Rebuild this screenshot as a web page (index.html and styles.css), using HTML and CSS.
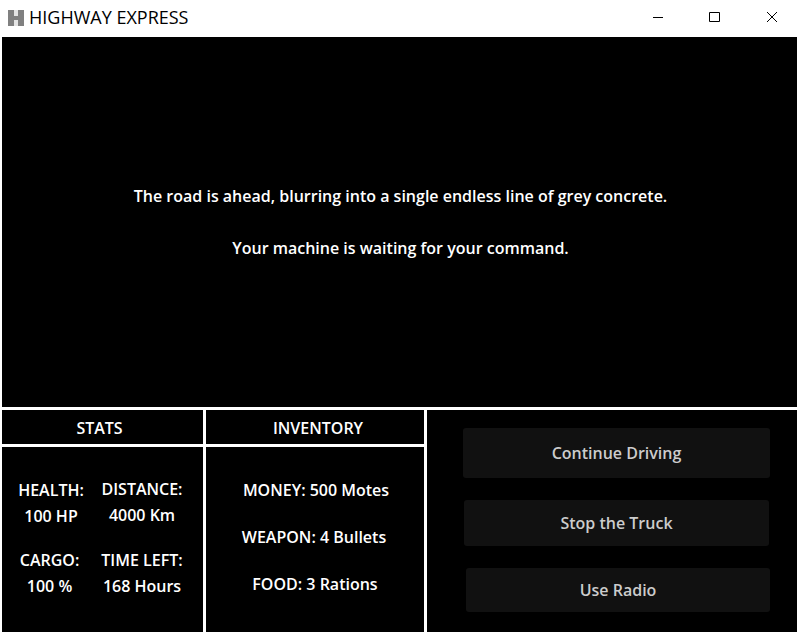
FILE: index.html
```html
<!DOCTYPE html>
<html lang="en">
<head>
<meta charset="UTF-8" />
<meta name="viewport" content="width=device-width, initial-scale=1" />
<title>Highway Express</title>
<link rel="stylesheet" href="styles.css">
</head>
<body>

<div class="window">
  <div class="titlebar">
    <svg class="logo" width="16" height="16" viewBox="0 0 16 16"><path d="M6 0h4v16H6z" fill="#e4e4e4"/><path d="M0 0h6v6h4V0h6v16h-6v-6H6v6H0z" fill="#808080"/></svg>
    <span class="app-name">HIGHWAY EXPRESS</span>
    <div class="controls">
      <svg class="control" width="58" height="37" viewBox="0 0 58 37"><path d="M30 17.500h10" stroke="#000" fill="none"/></svg>
      <svg class="control" width="58" height="37" viewBox="0 0 58 37"><path d="M28.500 12.500h10v9h-10z" stroke="#000" fill="none"/></svg>
      <svg class="control" width="58" height="37" viewBox="0 0 58 37"><path d="M28 12l10 10M38 12L28 22" stroke="#000" fill="none"/></svg>
    </div>
  </div>

  <div class="screen">
    <p>The road is ahead, blurring into a single endless line of grey concrete.</p>
    <p>Your machine is waiting for your command.</p>
  </div>

  <div class="panels">
    <div class="panel stats">
      <div class="panel-head">STATS</div>
      <div class="stats-grid">
        <div class="stat"><span>HEALTH:</span><span>100 HP</span></div>
        <div class="stat stat-high"><span>DISTANCE:</span><span>4000 Km</span></div>
        <div class="stat stat-cargo"><span>CARGO:</span><span>100 %</span></div>
        <div class="stat"><span>TIME LEFT:</span><span>168 Hours</span></div>
      </div>
    </div>
    <div class="panel inventory">
      <div class="panel-head">INVENTORY</div>
      <div class="inventory-list">
        <div class="item-money">MONEY: 500 Motes</div>
        <div class="item-weapon">WEAPON: 4 Bullets</div>
        <div>FOOD: 3 Rations</div>
      </div>
    </div>
    <div class="actions">
      <button class="action action-drive">Continue Driving</button>
      <button class="action action-stop">Stop the Truck</button>
      <button class="action action-radio">Use Radio</button>
    </div>
  </div>
</div>

</body>
</html>
```
FILE: styles.css
```css
html, body {
  margin: 0;
  height: 100%;
}
body {
  font-family: "Open Sans", sans-serif;
  font-size: 16px;
  font-weight: 600;
  color: #fff;
  background: #fff;
  overflow: hidden;
}
.window {
  display: flex;
  flex-direction: column;
  height: 634px;
  box-sizing: border-box;
  padding: 0 2px 2px;
}
.titlebar {
  display: flex;
  align-items: center;
  height: 37px;
  flex: none;
  color: #000;
}
.logo {
  margin: 0 5px 1px 6px;
}
.app-name {
  margin-bottom: 3px;
  font-size: 18px;
  font-weight: 400;
}
.controls {
  display: flex;
  margin-left: auto;
}
.control {
  display: block;
}
.screen {
  height: 370px;
  flex: none;
  background: #000;
  box-sizing: border-box;
  padding: 148px 0 0 2px;
  text-align: center;
}
.screen p {
  margin: 0 0 30px;
  line-height: 22px;
}
.panels {
  display: flex;
  flex: 1;
  margin-top: 3px;
  background: #000;
}
.panel {
  display: flex;
  flex-direction: column;
  border-right: 3px solid #fff;
  text-align: center;
}
.stats {
  width: 201px;
}
.stats .panel-head {
  padding-right: 6px;
}
.inventory {
  width: 218px;
}
.inventory .panel-head {
  padding-left: 6px;
}
.panel-head {
  height: 34px;
  line-height: 37px;
  border-bottom: 3px solid #fff;
}
.stats-grid {
  display: grid;
  grid-template-columns: 98px 84px;
  grid-auto-rows: 70px;
  padding-top: 30px;
  justify-content: start;
  line-height: 26px;
}
.stat {
  display: flex;
  flex-direction: column;
  align-items: center;
}
.stat-high {
  margin-top: -1px;
}
.stat-cargo {
  padding-right: 3px;
}
.inventory-list {
  display: flex;
  flex-direction: column;
  gap: 25px;
  padding-top: 32px;
  line-height: 22px;
}
.item-money {
  padding-left: 2px;
}
.item-weapon {
  padding-right: 2px;
}
.actions {
  flex: 1;
  display: flex;
  flex-direction: column;
}
.action {
  display: block;
  font: inherit;
  color: #ccc;
  background: #111;
  border: none;
  border-radius: 3px;
  padding: 0;
}
.action-drive {
  width: 307px;
  height: 50px;
  margin: 18px 0 0 36px;
}
.action-stop {
  width: 305px;
  height: 46px;
  margin: 22px 0 0 37px;
}
.action-radio {
  width: 304px;
  height: 44px;
  margin: 22px 0 0 39px;
}
```
